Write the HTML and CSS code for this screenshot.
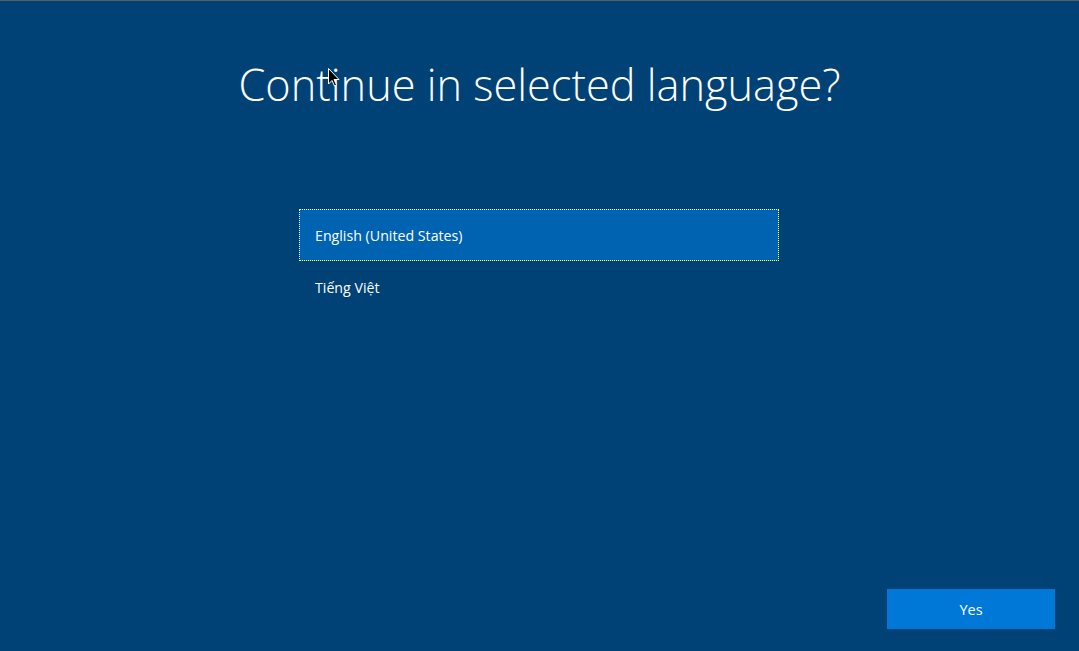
FILE: index.html
```html
<!DOCTYPE html>
<html lang="en">
<head>
    <meta charset="UTF-8">
    <title>Windows Setup</title>
    <link rel="stylesheet" href="styles.css">
</head>
<body>
    <div class="setup">
        <h1 class="title">Continue in selected language?</h1>

        <ul class="lang-list">
            <li class="lang-item selected">English (United States)</li>
            <li class="lang-item">Tiếng Việt</li>
        </ul>

        <div class="actions">
            <button class="btn">Yes</button>
        </div>
    </div>

    <svg class="cursor" width="12" height="19" viewBox="0 0 12 19">
        <path d="M0.5 0.5 L0.5 16 L4 12.5 L6.5 18 L8.5 17 L6 11.5 L11 11.5 Z" fill="#000" stroke="#fff" stroke-width="1"/>
    </svg>
</body>
</html>
```

FILE: styles.css
```css
* {
    margin: 0;
    padding: 0;
    box-sizing: border-box;
}

body {
    font-family: 'Open Sans', 'Noto Sans', sans-serif;
    background-color: #004275;
    color: #ffffff;
    width: 1079px;
    height: 651px;
    overflow: hidden;
    border-top: 1px solid #5c5c5c;
    position: relative;
}

.setup {
    display: flex;
    flex-direction: column;
    height: 650px;
}

.title {
    font-weight: 300;
    font-size: 43.3px;
    text-align: center;
    margin-top: 54px;
    line-height: 60px;
}

.lang-list {
    list-style: none;
    width: 480px;
    margin: 94px 0 0 299px;
}

.lang-item {
    height: 52px;
    line-height: 54px;
    padding-left: 16px;
    font-size: 14.2px;
}

.lang-item.selected {
    background-color: #0063b1;
    border: 1px dotted #ffffff;
    line-height: 51px;
    padding-left: 15px;
}

.actions {
    margin-top: auto;
    display: flex;
    justify-content: flex-end;
    padding: 0 24px 22px 0;
}

.btn {
    width: 168px;
    height: 40px;
    background-color: #0078d7;
    border: none;
    color: #ffffff;
    font-family: 'Open Sans', 'Noto Sans', sans-serif;
    font-size: 14.5px;
}

.cursor {
    position: absolute;
    left: 328px;
    top: 67px;
}
```
